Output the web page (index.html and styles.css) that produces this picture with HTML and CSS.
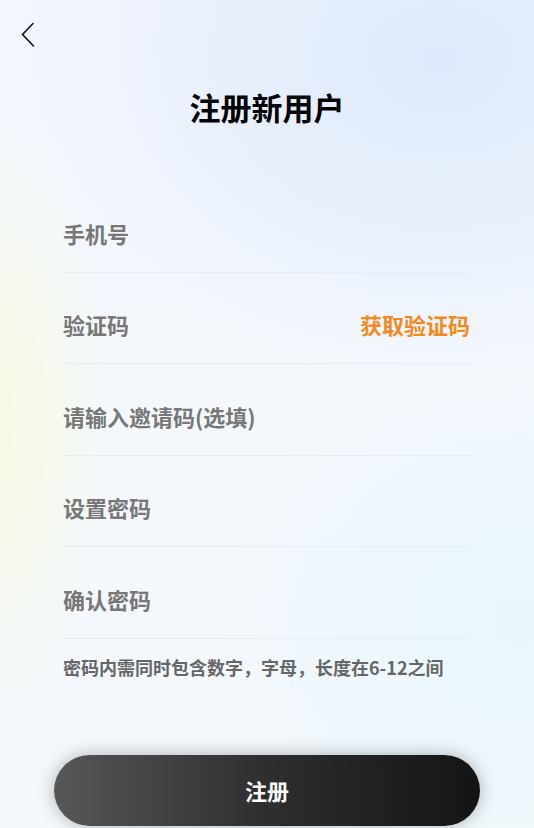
FILE: index.html
```html
<!DOCTYPE html>
<html lang="zh-CN">
<head>
<meta charset="utf-8">
<title>注册新用户</title>
<link rel="stylesheet" href="styles.css">
</head>
<body>
<div class="page">
  <div class="topbar">
    <svg class="back" width="14" height="26" viewBox="0 0 14 26" aria-hidden="true">
      <path d="M12 1.5 L1.5 12.5 L12.5 24" fill="none" stroke="#111" stroke-width="1.6" stroke-linecap="round" stroke-linejoin="miter"/>
    </svg>
  </div>
  <h1 class="title">注册新用户</h1>
  <div class="form">
    <div class="row"><span class="label">手机号</span></div>
    <div class="row"><span class="label">验证码</span><span class="code">获取验证码</span></div>
    <div class="row"><span class="label">请输入邀请码(选填)</span></div>
    <div class="row"><span class="label">设置密码</span></div>
    <div class="row"><span class="label">确认密码</span></div>
    <p class="hint">密码内需同时包含数字，字母，长度在6-12之间</p>
  </div>
  <div class="btn-wrap">
    <button class="submit">注册</button>
  </div>
</div>
</body>
</html>
```
FILE: styles.css
```css
* { box-sizing: border-box; }
html, body { margin: 0; padding: 0; }
body {
  width: 534px;
  height: 828px;
  overflow: hidden;
  font-family: "Noto Sans CJK SC", "Noto Sans", sans-serif;
  background:
    radial-gradient(ellipse 110px 300px at 0px 420px, rgba(246, 250, 224, 0.95), rgba(246, 250, 224, 0) 100%),
    radial-gradient(ellipse 420px 320px at 440px 60px, rgba(222, 233, 251, 1), rgba(222, 233, 251, 0) 100%),
    radial-gradient(ellipse 300px 260px at 520px 620px, rgba(232, 246, 252, 1), rgba(232, 246, 252, 0) 100%),
    linear-gradient(180deg, #f3f6fd 0%, #f4f8fd 50%, #f3f8fc 100%);
}
.page {
  display: flex;
  flex-direction: column;
  height: 828px;
}
.topbar {
  height: 70px;
  padding-left: 21px;
  display: flex;
  align-items: center;
}
.back { display: block; }
.title {
  margin: 17px 0 0;
  font-size: 31px;
  line-height: 40px;
  font-weight: 700;
  color: #000;
  text-align: center;
}
.form {
  margin: 54px 64px 0 63px;
}
.row {
  height: 91.5px;
  border-bottom: 1px solid #e9ecef;
  display: flex;
  align-items: flex-end;
  justify-content: space-between;
  padding-bottom: 24px;
}
.label {
  font-size: 22px;
  line-height: 30px;
  font-weight: 700;
  color: #777777;
}
.code {
  font-size: 22px;
  line-height: 30px;
  font-weight: 700;
  color: #f5891c;
}
.hint {
  margin: 16px 0 0;
  font-size: 18px;
  line-height: 24px;
  font-weight: 700;
  color: #666666;
}
.btn-wrap {
  margin-top: 76px;
  padding-left: 54px;
}
.submit {
  width: 426px;
  height: 71px;
  border: none;
  border-radius: 36px;
  background: linear-gradient(90deg, #575757 0%, #2e2e2e 50%, #141414 100%);
  box-shadow: 0 0 18px rgba(0, 0, 0, 0.28);
  color: #fff;
  font-family: "Noto Sans CJK SC", "Noto Sans", sans-serif;
  font-size: 22px;
  font-weight: 700;
  display: flex;
  align-items: center;
  justify-content: center;
}
```
